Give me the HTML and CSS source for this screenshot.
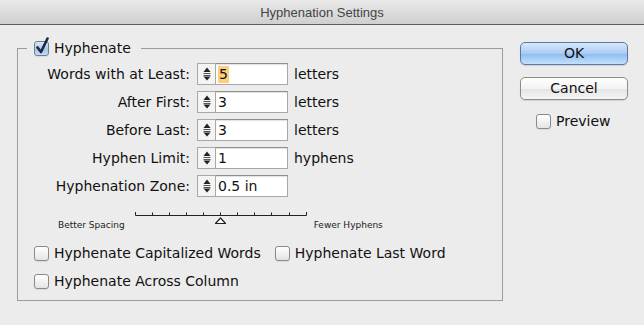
FILE: index.html
```html
<!DOCTYPE html>
<html>
<head>
<meta charset="utf-8">
<link rel="stylesheet" href="styles.css">
</head>
<body>
<div class="titlebar">Hyphenation Settings</div>
<div class="content">
  <fieldset class="group">
    <legend class="legend"><span class="cb checked"><svg viewBox="0 0 16 18" width="16" height="18"><path d="M3.5 10.5 L7 15 L13.5 1.5" fill="none" stroke="#1b2a44" stroke-width="2.6" stroke-linecap="round" stroke-linejoin="round"/></svg></span><span>Hyphenate</span></legend>
    <div class="fields">
      <span class="lbl">Words with at Least:</span>
      <span class="spin"><span class="arrows"><svg viewBox="0 0 16 20" width="16" height="20"><path d="M8 3.5 L11.5 8 L4.5 8 Z" fill="#222"/><path d="M4.5 9.5 H11.5 M4.5 11.5 H11.5" stroke="#555" stroke-width="1"/><path d="M8 16.5 L11.5 12.5 L4.5 12.5 Z" fill="#222"/></svg></span><span class="input"><span class="sel">5</span></span></span>
      <span class="unit">letters</span>

      <span class="lbl">After First:</span>
      <span class="spin"><span class="arrows"><svg viewBox="0 0 16 20" width="16" height="20"><path d="M8 3.5 L11.5 8 L4.5 8 Z" fill="#222"/><path d="M4.5 9.5 H11.5 M4.5 11.5 H11.5" stroke="#555" stroke-width="1"/><path d="M8 16.5 L11.5 12.5 L4.5 12.5 Z" fill="#222"/></svg></span><span class="input">3</span></span>
      <span class="unit">letters</span>

      <span class="lbl">Before Last:</span>
      <span class="spin"><span class="arrows"><svg viewBox="0 0 16 20" width="16" height="20"><path d="M8 3.5 L11.5 8 L4.5 8 Z" fill="#222"/><path d="M4.5 9.5 H11.5 M4.5 11.5 H11.5" stroke="#555" stroke-width="1"/><path d="M8 16.5 L11.5 12.5 L4.5 12.5 Z" fill="#222"/></svg></span><span class="input">3</span></span>
      <span class="unit">letters</span>

      <span class="lbl">Hyphen Limit:</span>
      <span class="spin"><span class="arrows"><svg viewBox="0 0 16 20" width="16" height="20"><path d="M8 3.5 L11.5 8 L4.5 8 Z" fill="#222"/><path d="M4.5 9.5 H11.5 M4.5 11.5 H11.5" stroke="#555" stroke-width="1"/><path d="M8 16.5 L11.5 12.5 L4.5 12.5 Z" fill="#222"/></svg></span><span class="input">1</span></span>
      <span class="unit">hyphens</span>

      <span class="lbl">Hyphenation Zone:</span>
      <span class="spin"><span class="arrows"><svg viewBox="0 0 16 20" width="16" height="20"><path d="M8 3.5 L11.5 8 L4.5 8 Z" fill="#222"/><path d="M4.5 9.5 H11.5 M4.5 11.5 H11.5" stroke="#555" stroke-width="1"/><path d="M8 16.5 L11.5 12.5 L4.5 12.5 Z" fill="#222"/></svg></span><span class="input">0.5 in</span></span>
      <span class="unit"></span>
    </div>
    <div class="slider">
      <span class="slabel">Better Spacing</span>
      <span class="track"><svg viewBox="0 0 174 16" width="174" height="16">
        <path d="M1.5 3 V6.5 H172.5 V3" fill="none" stroke="#222" stroke-width="1"/>
        <path d="M18.5 3.5 V6 M35.5 3.5 V6 M52.5 3.5 V6 M69.5 3.5 V6 M86.5 3.5 V6 M103.5 3.5 V6 M120.5 3.5 V6 M137.5 3.5 V6 M155.5 3.5 V6" stroke="#222" stroke-width="1"/>
        <path d="M86.5 9 L91.5 14.5 L81.5 14.5 Z" fill="#fff" stroke="#222" stroke-width="1.2" stroke-linejoin="round"/>
      </svg></span>
      <span class="slabel">Fewer Hyphens</span>
    </div>
    <div class="opts">
      <label class="opt"><span class="cb"></span>Hyphenate Capitalized Words</label>
      <label class="opt"><span class="cb"></span>Hyphenate Last Word</label>
      <label class="opt"><span class="cb"></span>Hyphenate Across Column</label>
    </div>
  </fieldset>
  <div class="buttons">
    <div class="btn ok">OK</div>
    <div class="btn">Cancel</div>
    <label class="opt preview"><span class="cb"></span>Preview</label>
  </div>
</div>
</body>
</html>
```
FILE: styles.css
```css
html, body {
  margin: 0;
  padding: 0;
}
body {
  width: 644px;
  height: 325px;
  background: #ececec;
  font-family: "DejaVu Sans", "Liberation Sans", sans-serif;
  font-size: 14px;
  color: #111;
  overflow: hidden;
}
.titlebar {
  height: 24px;
  line-height: 25px;
  text-align: center;
  color: #444;
  font-family: "Liberation Sans", Arial, sans-serif;
  font-size: 13px;
  background: linear-gradient(#e9e9e9, #cfcfcf);
  border-bottom: 1px solid #5e5e5e;
}
.content {
  display: flex;
  align-items: flex-start;
  padding: 15px 0 0 17px;
}
.group {
  margin: 0;
  box-sizing: border-box;
  width: 486px;
  height: 261px;
  border: 1px solid #9c9c9c;
  padding: 0;
  min-width: 0;
}
.legend {
  display: flex;
  align-items: center;
  margin-left: 9px;
  padding: 0 10px 0 7px;
  height: 16px;
  gap: 5px;
}
.cb {
  display: inline-block;
  box-sizing: border-box;
  width: 15px;
  height: 15px;
  border: 1px solid #8a8a8a;
  border-radius: 3px;
  background: linear-gradient(#ffffff, #e4e4e4);
  box-shadow: 0 1px 1px rgba(0,0,0,0.08);
  position: relative;
  flex: none;
}
.cb.checked {
  background: linear-gradient(#dce8f6, #a9c6ea 60%, #c8dcf3);
  border-color: #6f7f96;
}
.cb svg {
  position: absolute;
  left: -1px;
  top: -5px;
}
.fields {
  display: grid;
  grid-template-columns: 160px 91px auto;
  justify-content: start;
  column-gap: 7px;
  row-gap: 6px;
  align-items: center;
  margin-top: 7px;
  margin-left: 12px;
}
.lbl {
  text-align: right;
  white-space: nowrap;
}
.unit {
  margin-left: -1px;
}
.spin {
  display: flex;
  height: 22px;
}
.arrows {
  box-sizing: border-box;
  width: 18px;
  height: 22px;
  border: 1px solid #a8a8a8;
  border-right: none;
  background: #f4f4f4;
  display: flex;
  align-items: center;
  justify-content: center;
}
.input {
  box-sizing: border-box;
  width: 73px;
  height: 22px;
  border: 1px solid #a8a8a8;
  border-top-color: #8e8e8e;
  background: #fff;
  box-shadow: inset 0 1px 1px rgba(0,0,0,0.12);
  padding-left: 2px;
  line-height: 20px;
}
.sel {
  display: inline-block;
  background: #fdcf7d;
  padding: 0 1px;
  line-height: 17px;
}
.slider {
  display: flex;
  align-items: flex-start;
  margin-top: 12px;
  margin-left: 40px;
  height: 24px;
}
.slabel {
  font-size: 9px;
  margin-top: 11px;
  color: #222;
}
.track {
  margin: 0 6px 0 9px;
  height: 16px;
}
.track svg {
  display: block;
}
.opts {
  display: grid;
  grid-template-columns: auto auto;
  justify-content: start;
  column-gap: 14px;
  row-gap: 13px;
  margin-top: 13px;
  margin-left: 16px;
}
.opt {
  display: flex;
  align-items: center;
  gap: 5px;
  white-space: nowrap;
  line-height: 15px;
  height: 15px;
}
.buttons {
  display: flex;
  flex-direction: column;
  margin-left: 17px;
  margin-top: 2px;
  width: 108px;
}
.btn {
  box-sizing: border-box;
  height: 23px;
  border: 1px solid #8c8c8c;
  border-radius: 5px;
  background: linear-gradient(#ffffff, #f3f3f3 50%, #e4e4e4 51%, #f5f5f5);
  text-align: center;
  line-height: 21px;
  color: #111;
  margin-bottom: 12px;
  box-shadow: 0 1px 1px rgba(0,0,0,0.12);
}
.btn.ok {
  border-color: #5b77a6;
  background: linear-gradient(#d9e8fb, #a9cbf4 50%, #8dbcf0 51%, #c4e0fb);
}
.preview {
  margin-left: 16px;
  margin-top: 2px;
}
```
